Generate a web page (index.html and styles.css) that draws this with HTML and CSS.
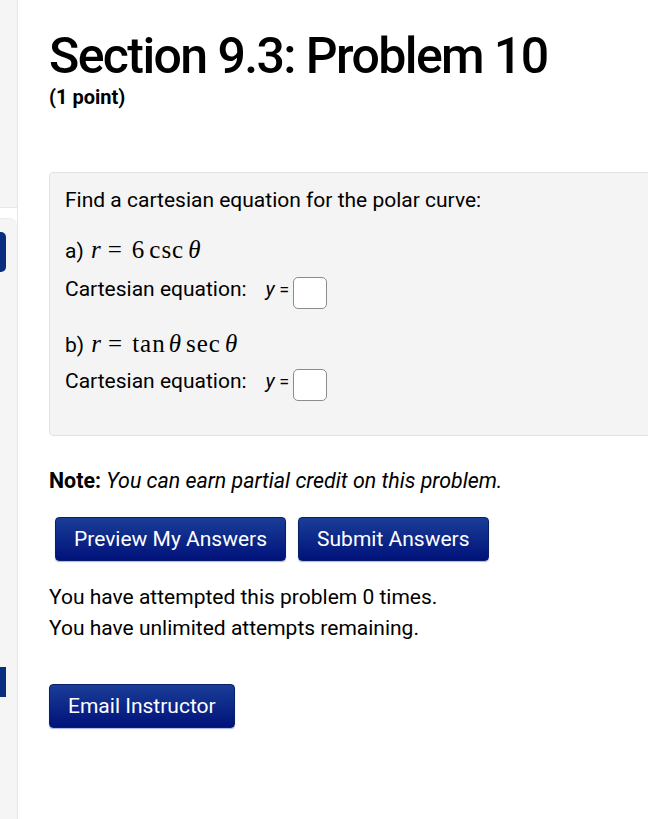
FILE: index.html
```html
<!DOCTYPE html>
<html>
<head>
<meta charset="utf-8">
<link rel="stylesheet" href="styles.css">
</head>
<body>
<div class="page">
  <aside class="sidebar">
    <div class="side-top"></div>
    <div class="side-nav">
      <div class="tab tab-1"></div>
      <div class="tab tab-2"></div>
    </div>
  </aside>
  <main class="main">
    <h1 class="title">Section 9.3: Problem 10</h1>
    <div class="points">(1 point)</div>
    <div class="problem">
      <p class="intro">Find a cartesian equation for the polar curve:</p>
      <p class="part part-a">a) <span class="math"><i>r</i><span class="eq">=</span>6<span class="fn">csc</span><i>θ</i></span></p>
      <div class="answer-row row-a">
        <span class="label">Cartesian equation:</span>
        <span class="var"><i>y</i> =</span>
        <span class="input"></span>
      </div>
      <p class="part part-b">b) <span class="math"><i>r</i><span class="eq">=</span><span class="fn fn-first">tan</span><i>θ</i><span class="fn">sec</span><i>θ</i></span></p>
      <div class="answer-row row-b">
        <span class="label">Cartesian equation:</span>
        <span class="var"><i>y</i> =</span>
        <span class="input"></span>
      </div>
    </div>
    <p class="note"><b>Note:</b> <i>You can earn partial credit on this problem.</i></p>
    <div class="buttons">
      <button class="btn">Preview My Answers</button>
      <button class="btn">Submit Answers</button>
    </div>
    <p class="attempts">You have attempted this problem 0 times.<br>You have unlimited attempts remaining.</p>
    <button class="btn btn-email">Email Instructor</button>
  </main>
</div>
</body>
</html>
```
FILE: styles.css
```css
html, body {
  margin: 0;
  padding: 0;
  background: #ffffff;
}
body {
  font-family: Roboto, "Liberation Sans", sans-serif;
  color: #000;
  width: 648px;
  height: 819px;
  overflow: hidden;
}
.page {
  display: flex;
  min-height: 819px;
}
.sidebar {
  width: 17px;
  flex: none;
  display: flex;
  flex-direction: column;
  border-right: 1px solid #e6e6e6;
  background: #ffffff;
}
.side-top {
  height: 207px;
  background: #f5f5f5;
  border-bottom: 1px solid #e6e6e6;
}
.side-nav {
  margin-top: 10px;
  flex: 1;
  background: #f5f5f5;
  border-top: 1px solid #ececec;
  border-top-right-radius: 8px;
  position: relative;
}
.tab {
  position: absolute;
  left: 0;
  background: #0b2d80;
}
.tab-1 {
  top: 13px;
  width: 6px;
  height: 40px;
  border-radius: 0 5px 5px 0;
}
.tab-2 {
  top: 448px;
  width: 6px;
  height: 30px;
}
.main {
  flex: 1;
  padding-left: 31px;
  min-width: 0;
}
.title {
  margin: 27px 0 0;
  font-size: 50px;
  font-weight: 500;
  letter-spacing: -1.6px;
  line-height: 58px;
  white-space: nowrap;
}
.points {
  font-size: 20px;
  font-weight: 700;
  line-height: 24px;
}
.problem {
  margin-top: 63px;
  margin-right: -20px;
  background: #f4f4f4;
  border: 1px solid #e2e2e2;
  border-radius: 4px;
  padding: 13px 15px 34px;
  font-size: 21px;
}
.problem p {
  margin: 0;
}
.intro {
  line-height: 28px;
}
.part {
  line-height: 30px;
}
.part-a {
  margin-top: 22px !important;
}
.part-b {
  margin-top: 21px !important;
}
.math {
  font-family: "Liberation Serif", "DejaVu Serif", serif;
  font-size: 25px;
  line-height: 25px;
  margin-left: 2px;
}
.math i {
  font-style: italic;
}
.eq {
  margin: 0 10px 0 7px;
}
.fn {
  margin: 0 4px 0 5px;
  letter-spacing: 1px;
}
.fn-first {
  margin-left: 0;
  margin-right: 3px;
}
.answer-row {
  display: flex;
  align-items: flex-start;
  line-height: 28px;
}
.row-a {
  margin-top: 9px;
}
.row-b {
  margin-top: 7px;
}
.label {
  margin-right: 19px;
}
.var {
  font-size: 18px;
  margin-right: 4px;
}
.var i {
  font-size: 20px;
}
.input {
  display: block;
  margin-top: 2px;
  width: 32px;
  height: 30px;
  background: #fff;
  border: 1px solid #8c8c8c;
  border-radius: 5px;
}
.note {
  margin: 31px 0 0;
  font-size: 21.4px;
  line-height: 28px;
}
.buttons {
  display: flex;
  gap: 12px;
  margin: 22px 0 0 6px;
}
.btn {
  font-family: Roboto, "Liberation Sans", sans-serif;
  font-size: 21px;
  color: #fff;
  background: linear-gradient(#1a3d97, #00127a);
  border: 1px solid #0a1f6a;
  border-radius: 4px;
  height: 44px;
  padding: 0 18px;
  box-shadow: 0 1px 1px rgba(80, 110, 200, 0.5);
  cursor: pointer;
}
.attempts {
  margin: 21px 0 0;
  font-size: 21px;
  line-height: 31px;
}
.btn-email {
  margin-top: 40px;
  display: block;
}
```
